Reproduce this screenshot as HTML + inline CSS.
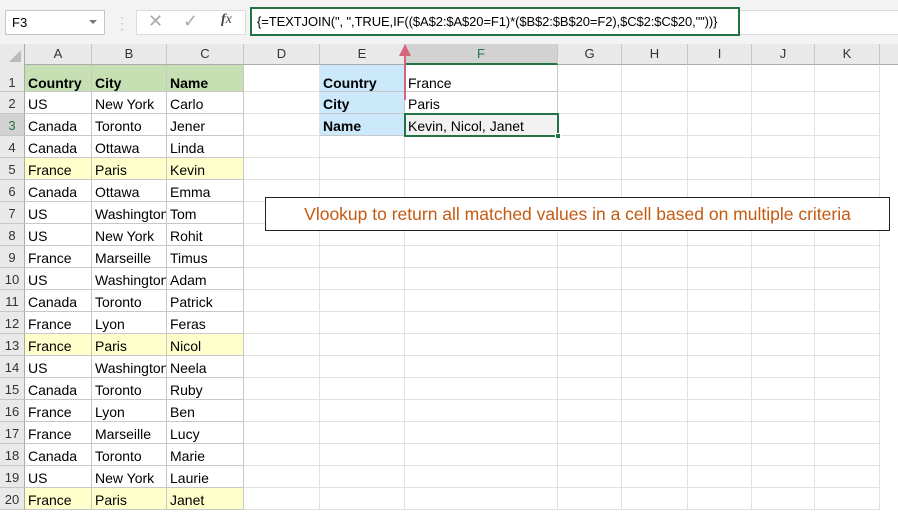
<!DOCTYPE html><html><head><style>
body{margin:0;width:898px;height:512px;overflow:hidden;background:#fff;font-family:"Liberation Sans",Arial,sans-serif;position:relative}
div{position:absolute;box-sizing:border-box}
.c{font-size:14px;color:#000;padding-left:3px;line-height:22px;white-space:nowrap;overflow:hidden;border-right:1px solid #d4d4d4;border-bottom:1px solid #d4d4d4}
.h{background:#e9e9e9;border-right:1px solid #c6c6c6;border-bottom:1px solid #ababab;text-align:center;font-size:13px;color:#333;line-height:20px}
.r{background:#e9e9e9;border-right:1px solid #ababab;border-bottom:1px solid #c6c6c6;text-align:center;font-size:13px;color:#333}
</style></head><body>
<div style="left:0;top:0;width:898px;height:44px;background:#f3f3f3"></div>
<div style="left:5px;top:10px;width:100px;height:25px;background:#fff;border:1px solid #c6c6c6;font-size:13px;line-height:23px;padding-left:6px">F3</div>
<div style="left:89px;top:20px;width:0;height:0;border-left:4px solid transparent;border-right:4px solid transparent;border-top:4px solid #777"></div>
<div style="left:120px;top:14px;color:#aaa;font-size:12px;line-height:6px">·<br>·<br>·</div>
<div style="left:136px;top:10px;width:110px;height:25px;background:#fff;border:1px solid #dcdcdc"></div>
<div style="left:148px;top:11px;font-size:18px;color:#aaa">✕</div>
<div style="left:183px;top:11px;font-size:18px;color:#aaa">✓</div>
<div style="left:221px;top:12px;font-size:14px;color:#444;font-style:italic;font-family:'Liberation Serif',serif"><b>f</b>x</div>
<div style="left:250px;top:10px;width:648px;height:25px;background:#fff;border-top:1px solid #dcdcdc;border-bottom:1px solid #dcdcdc"></div>
<div style="left:250px;top:7px;width:490px;height:29px;background:#fff;border:2px solid #217346;font-size:13px;line-height:25px;padding-left:5px;white-space:nowrap;letter-spacing:-0.1px">{=TEXTJOIN(", ",TRUE,IF(($A$2:$A$20=F1)*($B$2:$B$20=F2),$C$2:$C$20,""))}</div>
<div style="left:0;top:44px;width:898px;height:21px;background:#e9e9e9;border-bottom:1px solid #ababab"></div>
<div style="left:0;top:44px;width:25px;height:21px;border-right:1px solid #ababab;background:#e9e9e9"></div>
<div style="left:9px;top:50px;width:0;height:0;border-left:12px solid transparent;border-bottom:12px solid #bbb"></div>
<div class="h" style="left:25px;top:44px;width:67px;height:21px">A</div>
<div class="h" style="left:92px;top:44px;width:75px;height:21px">B</div>
<div class="h" style="left:167px;top:44px;width:77px;height:21px">C</div>
<div class="h" style="left:244px;top:44px;width:76px;height:21px">D</div>
<div class="h" style="left:320px;top:44px;width:85px;height:21px">E</div>
<div class="h" style="left:405px;top:44px;width:153px;height:21px;background:#d2d2d2;border-bottom:2px solid #217346;color:#217346">F</div>
<div class="h" style="left:558px;top:44px;width:64px;height:21px">G</div>
<div class="h" style="left:622px;top:44px;width:66px;height:21px">H</div>
<div class="h" style="left:688px;top:44px;width:64px;height:21px">I</div>
<div class="h" style="left:752px;top:44px;width:63px;height:21px">J</div>
<div class="h" style="left:815px;top:44px;width:65px;height:21px">K</div>
<div id="g"></div>
<script>
var d=[["Country","City","Name"],["US","New York","Carlo"],["Canada","Toronto","Jener"],["Canada","Ottawa","Linda"],["France","Paris","Kevin"],["Canada","Ottawa","Emma"],["US","Washington","Tom"],["US","New York","Rohit"],["France","Marseille","Timus"],["US","Washington","Adam"],["Canada","Toronto","Patrick"],["France","Lyon","Feras"],["France","Paris","Nicol"],["US","Washington","Neela"],["Canada","Toronto","Ruby"],["France","Lyon","Ben"],["France","Marseille","Lucy"],["Canada","Toronto","Marie"],["US","New York","Laurie"],["France","Paris","Janet"]];
var xs=[25,92,167,244,320,405,558,622,688,752,815,880,898];
var h="";
for(var i=0;i<20;i++){var t=i==0?65:92+(i-1)*22,hh=i==0?27:22;
h+='<div class="r" style="left:0;top:'+t+'px;width:25px;height:'+hh+'px;line-height:'+(hh+(i==0?8:2))+'px;'+(i==2?'color:#217346;background:#d2d2d2':'')+'">'+(i+1)+'</div>';
for(var j=0;j<11;j++){var bg='#fff',tx='',fw='normal';
if(j<3){tx=d[i][j];if(i==0){bg='#c6e0b4';fw='bold'}else if(d[i][0]=="France"&&d[i][1]=="Paris")bg='#ffffcc';}
if(i<3&&j==4){bg='#cce8fb';fw='bold';tx=["Country","City","Name"][i]}
if(i<3&&j==5){tx=["France","Paris","Kevin, Nicol, Janet"][i];bg=i==2?'#f2f2f2':'#fff'}
var bc='#e2e2e2';
if(j<3||(i<3&&(j==4||j==5)))bc='#c8c8c8';
h+='<div class="c" style="left:'+xs[j]+'px;top:'+t+'px;width:'+(xs[j+1]-xs[j])+'px;height:'+hh+'px;background:'+bg+';font-weight:'+fw+';border-color:'+bc+';line-height:'+(hh+(i==0?10:3))+'px">'+tx+'</div>';}}
document.getElementById('g').innerHTML=h;
</script>
<div style="left:404px;top:113px;width:155px;height:24px;border:2px solid #217346"></div>
<div style="left:555px;top:133px;width:6px;height:6px;background:#217346;border:1px solid #fff"></div>
<div style="left:404px;top:52px;width:2px;height:48px;background:#d4667a"></div>
<div style="left:399px;top:44px;width:0;height:0;border-left:6px solid transparent;border-right:6px solid transparent;border-bottom:12px solid #d4667a"></div>
<div style="left:265px;top:197px;width:625px;height:34px;background:#fff;border:1.5px solid #222;color:#c55a11;font-size:17.5px;line-height:33px;text-align:center">Vlookup to return all matched values in a cell based on multiple criteria</div>
</body></html>
